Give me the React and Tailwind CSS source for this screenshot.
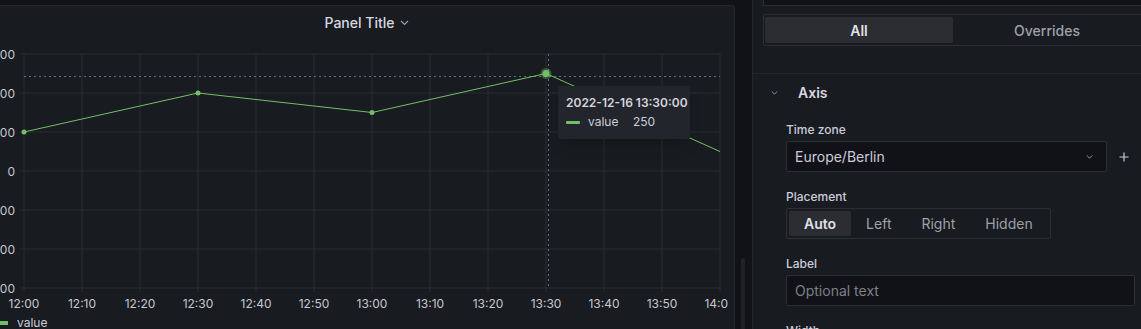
import React from 'react';
import { Plus } from 'lucide-react';

const gridX = [24, 82, 140, 198, 256, 314, 372, 430, 488, 546, 604, 662, 720];
const timeLabels = ['12:00', '12:10', '12:20', '12:30', '12:40', '12:50', '13:00', '13:10', '13:20', '13:30', '13:40', '13:50', '14:00'];
const yTicks = [300, 200, 100, 0, -100, -200, -300];
const yOf = (v) => 133 - 0.39 * v;
const series = [[24, 100], [198, 200], [372, 150], [546, 250], [720, 50]];

const Chevron = ({ className }) => (
  <svg width="9" height="6" viewBox="0 0 9 6" className={className}>
    <polyline points="1,1 4.5,4.5 8,1" fill="none" stroke="currentColor" strokeWidth="1.2" />
  </svg>
);

const Field = ({ label, children }) => (
  <div className="mb-[16px]">
    <div className="h-[18px] flex items-center text-[12px] font-medium text-[#ccccdc]">{label}</div>
    <div className="mt-[2px]">{children}</div>
  </div>
);

const Chart = () => (
  <div className="relative">
    <svg width="728" height="276" className="block">
      {/* grid */}
      {yTicks.map((v) => (
        <line key={v} x1="20" x2="720" y1={yOf(v)} y2={yOf(v)} stroke="#2a2d32" strokeWidth="1" />
      ))}
      {gridX.map((x) => (
        <line key={x} x1={x} x2={x} y1="16" y2="254" stroke="#2a2d32" strokeWidth="1" />
      ))}
      {yTicks.map((v) => (
        <text key={v} x="15" y={yOf(v)} textAnchor="end" dominantBaseline="central" fontSize="12" fill="#c7c7d1">{v}</text>
      ))}
      {gridX.map((x, i) => (
        <text key={x} x={x} y="265" textAnchor="middle" dominantBaseline="central" fontSize="12" fill="#c7c7d1">{timeLabels[i]}</text>
      ))}
      {/* crosshair */}
      <line x1="24" x2="720" y1="38.5" y2="38.5" stroke="#587584" strokeWidth="1" strokeDasharray="2 3" />
      <line x1="548.5" x2="548.5" y1="16" y2="250" stroke="#587584" strokeWidth="1" strokeDasharray="2 3" />
      {/* series */}
      <polyline points={series.map(([x, v]) => `${x},${yOf(v)}`).join(' ')} fill="none" stroke="#73bf69" strokeWidth="1" />
      {series.slice(0, 4).map(([x, v]) => (
        <circle key={x} cx={x} cy={yOf(v)} r="2.5" fill="#73bf69" />
      ))}
      <circle cx="546" cy={yOf(250)} r="5.5" fill="#73bf69" fillOpacity="0.35" />
      <circle cx="546" cy={yOf(250)} r="3.5" fill="#73bf69" />
    </svg>

    {/* tooltip */}
    <div className="absolute left-[558px] top-[48px] w-[132px] h-[53px] bg-[#22252b] rounded-[2px] shadow-lg px-[8px] pt-[8px] whitespace-nowrap">
      <div className="text-[12px] font-semibold leading-[18px] text-[#d4d4de]">2022-12-16 13:30:00</div>
      <div className="flex items-center h-[20px] text-[12px] text-[#ccccdc]">
        <span className="w-[14px] h-[3px] bg-[#73bf69] rounded-[1px]" />
        <span className="ml-[8px] w-[45px]">value</span>
        <span>250</span>
      </div>
    </div>
  </div>
);

export default function App() {
  return (
    <div className="w-[1141px] h-[329px] overflow-hidden flex bg-[#111217] font-['Inter',_sans-serif] text-[#ccccdc]">
      {/* panel */}
      <div className="w-[735px] shrink-0 pt-[5px] flex flex-col">
        <div className="flex-1 bg-[#181b1f] border-t border-r border-[#24262b] rounded-tr-[3px] flex flex-col">
          <div className="h-[32px] flex items-center justify-center gap-[6px]">
            <span className="text-[14px] font-medium text-[#d8d8e2]">Panel Title</span>
            <Chevron className="text-[#9d9fa8] mt-[1px]" />
          </div>
          <Chart />
          <div className="flex items-center h-[16px] mt-[1px]">
            <span className="w-[8px] h-[4px] bg-[#73bf69]" />
            <span className="ml-[9px] text-[12px] text-[#ccccdc]">value</span>
          </div>
        </div>
      </div>

      {/* gutter with scrollbar */}
      <div className="w-[17px] shrink-0 flex flex-col pt-[258px] pl-[6px]">
        <div className="w-[4px] flex-1 bg-[#202226] rounded-t-[2px]" />
      </div>

      {/* options pane */}
      <div className="flex-1 bg-[#181b1f] border-l border-[#24262b] flex flex-col">
        <div className="pl-[10px]">
          <div className="h-[6px] bg-[#111217] border-l border-b border-[#2c2e34]" />
          <div className="mt-[8px] h-[32px] w-[380px] border border-[#2c2e34] rounded-[2px] px-[1px] py-[2px] flex">
            <div className="w-[188px] h-full bg-[#2b2d32] rounded-[2px] flex items-center justify-center text-[14px] font-semibold text-[#e0e0ea]">All</div>
            <div className="w-[188px] h-full flex items-center justify-center text-[14px] font-medium text-[#9fa0aa]">Overrides</div>
          </div>
        </div>

        <div className="mt-[27px] border-t border-[#24262b]">
          <div className="h-[37px] flex items-center pl-[18px]">
            <Chevron className="text-[#9d9fa8] w-[7px]" />
            <span className="ml-[20px] text-[14px] font-semibold text-[#d8d8e2]">Axis</span>
          </div>

          <div className="mt-[10px] pl-[33px]">
            <Field label="Time zone">
              <div className="flex items-center">
                <div className="w-[321px] h-[31px] bg-[#111217] border border-[#2c2e34] rounded-[2px] flex items-center justify-between pl-[8px] pr-[13px]">
                  <span className="text-[14px] text-[#ccccdc]">Europe/Berlin</span>
                  <Chevron className="text-[#9d9fa8] w-[7px]" />
                </div>
                <Plus size={14} strokeWidth={2} className="ml-[10px] text-[#ccccdc]" />
              </div>
            </Field>

            <Field label="Placement">
              <div className="inline-flex h-[31px] border border-[#2c2e34] rounded-[2px] p-[2px]">
                <div className="px-[15px] bg-[#2b2d32] rounded-[2px] flex items-center text-[14px] font-semibold text-[#e0e0ea]">Auto</div>
                <div className="px-[15px] flex items-center text-[14px] text-[#9fa0aa]">Left</div>
                <div className="px-[15px] flex items-center text-[14px] text-[#9fa0aa]">Right</div>
                <div className="px-[15px] flex items-center text-[14px] text-[#9fa0aa]">Hidden</div>
              </div>
            </Field>

            <Field label="Label">
              <div className="w-[349px] h-[31px] bg-[#111217] border border-[#2c2e34] rounded-[2px] flex items-center pl-[8px] text-[14px] text-[#7e8088]">
                Optional text
              </div>
            </Field>

            <Field label="Width">
              <div className="w-[349px] h-[31px]" />
            </Field>
          </div>
        </div>
      </div>
    </div>
  );
}
